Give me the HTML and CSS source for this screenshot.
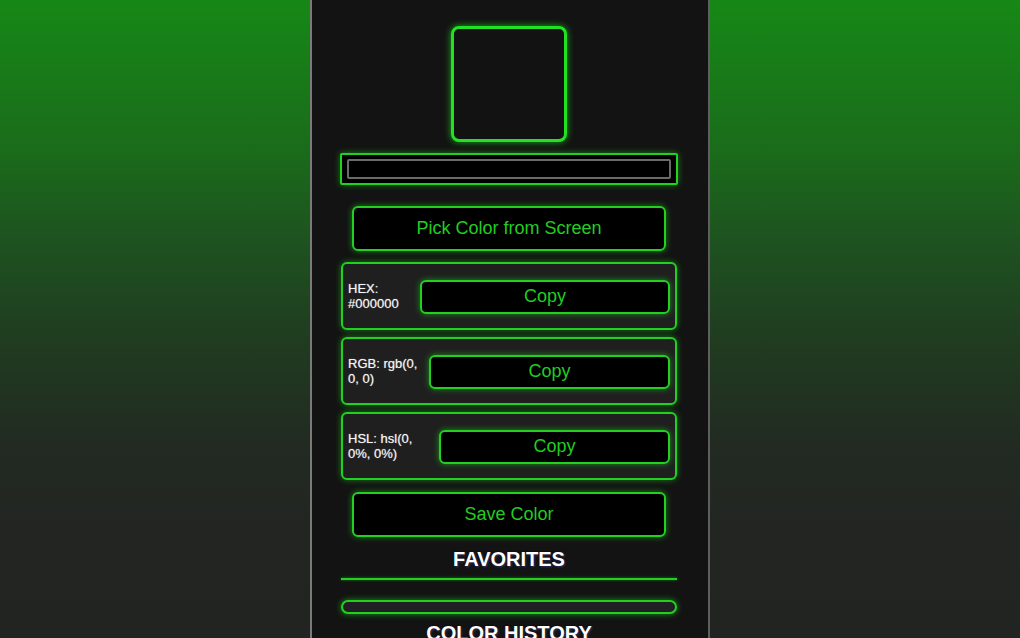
FILE: index.html
```html
<!DOCTYPE html>
<html>
<head>
<meta charset="utf-8">
<title>Color Picker</title>
<link rel="stylesheet" href="styles.css">
</head>
<body>
  <main class="panel">
    <div class="preview"></div>
    <div class="picker"><div class="picker-swatch"></div></div>
    <button class="btn btn-wide btn-pick">Pick Color from Screen</button>
    <div class="row">
      <span class="label label-hex">HEX: #000000</span>
      <button class="btn btn-copy">Copy</button>
    </div>
    <div class="row">
      <span class="label label-rgb">RGB: rgb(0, 0, 0)</span>
      <button class="btn btn-copy">Copy</button>
    </div>
    <div class="row">
      <span class="label label-hsl">HSL: hsl(0, 0%, 0%)</span>
      <button class="btn btn-copy">Copy</button>
    </div>
    <button class="btn btn-wide btn-save">Save Color</button>
    <h2 class="heading heading-fav">FAVORITES</h2>
    <div class="divider"></div>
    <div class="list-box"></div>
    <h2 class="heading heading-hist">COLOR HISTORY</h2>
  </main>
</body>
</html>
```

FILE: styles.css
```css
html, body {
  margin: 0;
  padding: 0;
  height: 638px;
  overflow: hidden;
}

body {
  font-family: "Liberation Sans", Arial, sans-serif;
  background: linear-gradient(to bottom,
    #168816 0%,
    #1a6e1a 22%,
    #1e5220 38%,
    #203b20 54%,
    #222a22 70%,
    #222522 85%,
    #222422 100%);
}

.panel {
  box-sizing: border-box;
  width: 400px;
  height: 660px;
  margin: -2px auto 0;
  padding: 26px 31px 0 29px;
  background: #131313;
  border: 2px solid #5e5e5e;
  border-left-color: #7a7a7a;
  display: flex;
  flex-direction: column;
}

.preview {
  box-sizing: border-box;
  width: 116px;
  height: 116px;
  margin: 0 auto;
  border: 3px solid #22e022;
  border-radius: 8px;
  background: #121212;
  box-shadow: 0 0 7px rgba(30, 255, 30, 0.65);
}

.picker {
  box-sizing: border-box;
  height: 32px;
  margin: 11px -1px 0 -1px;
  padding: 4px;
  background: #000;
  border: 2px solid #22d022;
  border-radius: 2px;
  box-shadow: 0 0 6px rgba(30, 255, 30, 0.45);
}

.picker-swatch {
  box-sizing: border-box;
  height: 20px;
  margin: 0 1px;
  background: #000;
  border: 2px solid #6a6a6a;
  border-radius: 2px;
}

.btn {
  box-sizing: border-box;
  font-family: "Liberation Sans", Arial, sans-serif;
  font-size: 18px;
  color: #22cc22;
  background: #000;
  border: 2px solid #22d022;
  border-radius: 6px;
  box-shadow: 0 0 6px rgba(30, 255, 30, 0.5);
  padding: 0;
  cursor: pointer;
}

.btn-wide {
  height: 45px;
  margin-left: 11px;
  margin-right: 11px;
}

.btn-pick {
  margin-top: 21px;
}

.btn-save {
  margin-top: 12px;
}

.row {
  box-sizing: border-box;
  height: 68px;
  margin-top: 7px;
  padding: 0 5px 0 5px;
  display: flex;
  align-items: center;
  gap: 8px;
  background: #1f1f1f;
  border: 2px solid #22d022;
  border-radius: 6px;
  box-shadow: 0 0 6px rgba(30, 255, 30, 0.45);
}

.btn-pick + .row {
  margin-top: 11px;
}

.label {
  flex: none;
  font-size: 13px;
  line-height: 15px;
  color: #f4f4f4;
  text-shadow: 0 0 1px rgba(255, 255, 255, 0.6);
}

.label-hex { width: 64px; }
.label-rgb { width: 73px; }
.label-hsl { width: 83px; }

.btn-copy {
  flex: 1;
  height: 34px;
  margin-top: 1px;
}

.heading {
  margin: 8px 0 0;
  font-size: 20px;
  line-height: 23px;
  font-weight: bold;
  color: #fff;
  text-align: center;
  text-shadow: 0 0 2px #000, 1px 1px 2px rgba(90, 90, 200, 0.6);
}

.heading-fav {
  margin-top: 11px;
}

.divider {
  height: 2px;
  margin-top: 7px;
  background: #22d022;
  box-shadow: 0 0 3px rgba(30, 255, 30, 0.5);
}

.list-box {
  box-sizing: border-box;
  height: 14px;
  margin-top: 20px;
  background: #211f24;
  border: 2px solid #22d022;
  border-radius: 7px;
  box-shadow: 0 0 6px rgba(30, 255, 30, 0.55);
}

.heading-hist {
  margin-top: 8px;
}
```
